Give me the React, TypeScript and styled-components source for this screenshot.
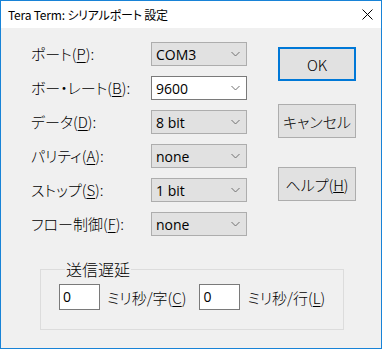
import React from 'react';
import styled, { createGlobalStyle } from 'styled-components';

const GlobalStyle = createGlobalStyle`
  html, body {
    margin: 0;
    padding: 0;
    background: #ffffff;
  }
  body {
    font-family: "Noto Sans CJK JP", "Noto Sans", sans-serif;
    font-weight: 300;
    color: #000000;
  }
`;

const Window = styled.div`
  width: 382px;
  height: 349px;
  box-sizing: border-box;
  border: 1px solid #1883d7;
  display: flex;
  flex-direction: column;
  background: #f0f0f0;
`;

const TitleBar = styled.div`
  height: 27px;
  flex: none;
  background: #ffffff;
  display: flex;
  align-items: center;
  justify-content: space-between;
  padding: 0 8px 0 7px;
  font-size: 12px;
  font-weight: 400;
  font-feature-settings: "palt";
  letter-spacing: -0.2px;
`;

const CloseIcon = () => (
  <svg width="11" height="11" viewBox="0 0 11 11">
    <path d="M0.5 0.5 L10.5 10.5 M10.5 0.5 L0.5 10.5" stroke="#000" strokeWidth="1" />
  </svg>
);

const Body = styled.div`
  flex: 1;
  padding: 14px 0 0 30px;
  display: flex;
  flex-direction: column;
`;

const Top = styled.div`
  display: flex;
`;

const Form = styled.div`
  display: grid;
  grid-template-columns: 120px 96px;
  row-gap: 10px;
  align-items: center;
`;

const Label = styled.span`
  font-size: 15px;
  line-height: 24px;
  font-feature-settings: "palt";
  u {
    text-decoration-thickness: 1px;
    text-underline-offset: 2px;
  }
`;

const Combo = styled.div<{ $editable?: boolean }>`
  box-sizing: border-box;
  height: 24px;
  border: 1px solid ${p => (p.$editable ? '#7a7a7a' : '#adadad')};
  background: ${p => (p.$editable ? '#ffffff' : '#e1e1e1')};
  display: flex;
  align-items: center;
  justify-content: space-between;
  padding: 0 6px 0 4px;
  font-family: "Open Sans", "Noto Sans", sans-serif;
  font-weight: 400;
  font-size: 14px;
`;

const Chevron = () => (
  <svg width="9" height="6" viewBox="0 0 9 6">
    <path d="M0.5 1 L4.5 5 L8.5 1" stroke="#707070" strokeWidth="1" fill="none" />
  </svg>
);

const Buttons = styled.div`
  margin-left: 31px;
  display: flex;
  flex-direction: column;
  padding-top: 5px;
`;

const Button = styled.div<{ $default?: boolean; $gap?: number }>`
  box-sizing: border-box;
  width: 78px;
  height: 34px;
  margin-top: ${p => p.$gap ?? 0}px;
  background: #e1e1e1;
  border: ${p => (p.$default ? '2px solid #0078d7' : '1px solid #adadad')};
  display: flex;
  align-items: center;
  justify-content: center;
  font-size: 15px;
  font-feature-settings: "palt";
`;

const Group = styled.fieldset`
  margin: 24px 0 0 9px;
  width: 304px;
  height: 70px;
  box-sizing: border-box;
  border: 1px solid #dcdcdc;
  padding: 8px 0 0 18px;
  display: flex;
  align-items: flex-start;
`;

const Legend = styled.legend`
  font-size: 16px;
  padding: 0 1px;
  margin-left: 6px;
  line-height: 18px;
`;

const DelayRow = styled.div`
  display: flex;
  align-items: center;
  margin-top: -2px;
`;

const NumberBox = styled.div`
  box-sizing: border-box;
  width: 41px;
  height: 26px;
  border: 1px solid #7a7a7a;
  background: #ffffff;
  padding: 2px 0 0 3px;
  font-family: "Open Sans", "Noto Sans", sans-serif;
  font-weight: 400;
  font-size: 14px;
  line-height: 20px;
`;

const DelayLabel = styled.span`
  font-size: 15px;
  margin: 0 13px 0 7px;
  font-feature-settings: "palt";
  u {
    text-decoration-thickness: 1px;
    text-underline-offset: 2px;
  }
`;

const rows = [
  { label: 'ポート', key: 'P', value: 'COM3' },
  { label: 'ボー・レート', key: 'B', value: '9600', editable: true },
  { label: 'データ', key: 'D', value: '8 bit' },
  { label: 'パリティ', key: 'A', value: 'none' },
  { label: 'ストップ', key: 'S', value: '1 bit' },
  { label: 'フロー制御', key: 'F', value: 'none' },
];

const App = () => (
  <>
    <GlobalStyle />
    <Window>
      <TitleBar>
        <span>Tera Term: シリアルポート 設定</span>
        <CloseIcon />
      </TitleBar>
      <Body>
        <Top>
          <Form>
            {rows.map(r => (
              <React.Fragment key={r.key}>
                <Label>
                  {r.label}(<u>{r.key}</u>):
                </Label>
                <Combo $editable={r.editable}>
                  <span>{r.value}</span>
                  <Chevron />
                </Combo>
              </React.Fragment>
            ))}
          </Form>
          <Buttons>
            <Button $default>OK</Button>
            <Button $gap={23}>キャンセル</Button>
            <Button $gap={29}>
              <span>
                ヘルプ(<u>H</u>)
              </span>
            </Button>
          </Buttons>
        </Top>
        <Group>
          <Legend>送信遅延</Legend>
          <DelayRow>
            <NumberBox>0</NumberBox>
            <DelayLabel>
              ミリ秒/字(<u>C</u>)
            </DelayLabel>
            <NumberBox>0</NumberBox>
            <DelayLabel>
              ミリ秒/行(<u>L</u>)
            </DelayLabel>
          </DelayRow>
        </Group>
      </Body>
    </Window>
  </>
);

export default App;
